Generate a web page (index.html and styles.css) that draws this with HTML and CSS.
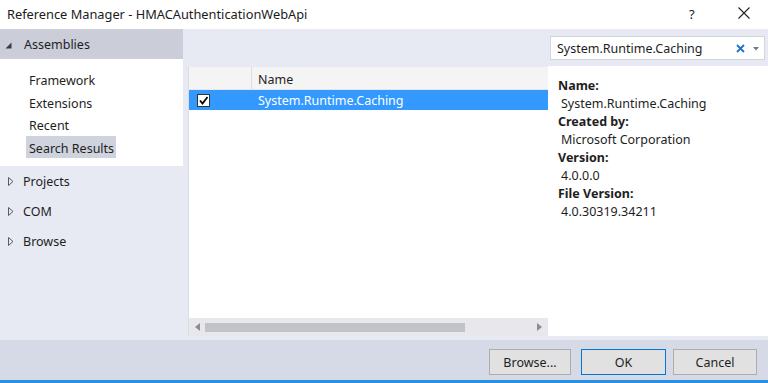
FILE: index.html
```html
<!DOCTYPE html>
<html>
<head>
<meta charset="utf-8">
<link rel="stylesheet" href="styles.css">
</head>
<body>
<div class="window">
  <header class="titlebar">
    <span class="title">Reference Manager - HMACAuthenticationWebApi</span>
    <span class="help">?</span>
    <span class="close"><svg width="12" height="12" viewBox="0 0 12 12"><path d="M0.5 0.5 L11.5 11.5 M11.5 0.5 L0.5 11.5" stroke="#222" stroke-width="1.1" fill="none"/></svg></span>
  </header>
  <div class="main">
    <nav class="sidebar">
      <div class="group-head">
        <svg class="tri-open" width="7" height="7" viewBox="0 0 7 7"><polygon points="6.5,0.5 6.5,6.5 0.5,6.5" fill="#3c3c3c"/></svg>
        <span>Assemblies</span>
      </div>
      <ul class="sub">
        <li class="sub-item">Framework</li>
        <li class="sub-item">Extensions</li>
        <li class="sub-item">Recent</li>
        <li class="sub-item active">Search Results</li>
      </ul>
      <div class="group">
        <svg class="tri" width="6" height="9" viewBox="0 0 6 9"><polygon points="0.5,0.5 5,4.5 0.5,8.5" fill="none" stroke="#5a5a5a" stroke-width="1"/></svg>
        <span>Projects</span>
      </div>
      <div class="group">
        <svg class="tri" width="6" height="9" viewBox="0 0 6 9"><polygon points="0.5,0.5 5,4.5 0.5,8.5" fill="none" stroke="#5a5a5a" stroke-width="1"/></svg>
        <span>COM</span>
      </div>
      <div class="group">
        <svg class="tri" width="6" height="9" viewBox="0 0 6 9"><polygon points="0.5,0.5 5,4.5 0.5,8.5" fill="none" stroke="#5a5a5a" stroke-width="1"/></svg>
        <span>Browse</span>
      </div>
    </nav>
    <section class="content">
      <div class="searchrow">
        <div class="search">
          <span class="search-text">System.Runtime.Caching</span>
          <svg class="search-clear" width="9" height="9" viewBox="0 0 9 9"><path d="M1 1 L8 8 M8 1 L1 8" stroke="#1e73c8" stroke-width="1.8" fill="none"/></svg>
          <svg class="search-drop" width="6" height="4" viewBox="0 0 6 4"><polygon points="0,0 6,0 3,3.5" fill="#7a7a7a"/></svg>
        </div>
      </div>
      <div class="panes">
        <div class="grid">
          <div class="grid-head">
            <div class="col-check"></div>
            <div class="col-name">Name</div>
          </div>
          <div class="grid-row selected">
            <div class="col-check">
              <span class="checkbox"><svg width="11" height="11" viewBox="0 0 11 11"><path d="M2 5.5 L4.5 8.5 L9.5 2" stroke="#000" stroke-width="1.8" fill="none"/></svg></span>
            </div>
            <div class="col-name">System.Runtime.Caching</div>
          </div>
          <div class="grid-fill"></div>
          <div class="hscroll">
            <svg class="arrow" width="5" height="8" viewBox="0 0 5 8"><polygon points="5,0 5,8 0,4" fill="#8a8c99"/></svg>
            <div class="track"><div class="thumb"></div></div>
            <svg class="arrow" width="5" height="8" viewBox="0 0 5 8"><polygon points="0,0 0,8 5,4" fill="#8a8c99"/></svg>
          </div>
        </div>
        <div class="details">
          <div class="label">Name:</div>
          <div class="value">System.Runtime.Caching</div>
          <div class="label">Created by:</div>
          <div class="value">Microsoft Corporation</div>
          <div class="label">Version:</div>
          <div class="value">4.0.0.0</div>
          <div class="label">File Version:</div>
          <div class="value">4.0.30319.34211</div>
        </div>
      </div>
    </section>
  </div>
  <footer class="footer">
    <button class="btn btn-browse">Browse...</button>
    <button class="btn btn-ok">OK</button>
    <button class="btn btn-cancel">Cancel</button>
  </footer>
</div>
</body>
</html>
```

FILE: styles.css
```css
* { box-sizing: border-box; }
html, body { margin: 0; padding: 0; }
body {
  width: 768px;
  height: 383px;
  overflow: hidden;
  font-family: "Noto Sans", "Open Sans", sans-serif;
  font-size: 12px;
  color: #1e1e1e;
  background: #e7e9f3;
}
.window {
  display: flex;
  flex-direction: column;
  height: 383px;
}
.titlebar {
  height: 29px;
  background: #ffffff;
  display: flex;
  align-items: center;
  padding-left: 7px;
  flex: none;
}
.title { flex: 1; font-size: 12.8px; color: #1b1b1b; padding-bottom: 2px; }
.help { width: 14px; font-size: 13px; margin-right: 35px; color: #222; padding-bottom: 2px; }
.close { width: 12px; height: 12px; margin-right: 18px; display: flex; margin-bottom: 3px; }

.main {
  flex: 1;
  display: flex;
  min-height: 0;
}
.sidebar {
  width: 183px;
  flex: none;
  background: #e7e9f3;
}
.group-head {
  height: 30px;
  background: #cbcdd9;
  display: flex;
  align-items: center;
  padding-left: 5px;
  font-size: 12.5px;
}
.tri-open { margin-right: 12px; margin-top: 2px; }
.sub {
  list-style: none;
  margin: 0;
  padding: 9px 0 8px 0;
  background: #ffffff;
}
.sub-item {
  height: 22.5px;
  line-height: 19.5px;
  padding-top: 3px;
  padding-left: 29px;
  font-size: 12.5px;
}
.sub-item.active {
  margin-left: 26px;
  margin-right: 67px;
  padding-left: 3px;
  background: #cfd3de;
}
.group {
  height: 30px;
  display: flex;
  align-items: center;
  padding-left: 8px;
  padding-top: 1px;
  font-size: 12.5px;
}
.tri { margin-right: 9px; }

.content {
  flex: 1;
  display: flex;
  flex-direction: column;
  padding: 7px 0 4px 5px;
  min-width: 0;
}
.searchrow {
  height: 24px;
  display: flex;
  justify-content: flex-end;
  padding-right: 3px;
  margin-bottom: 6px;
  flex: none;
}
.search {
  width: 215px;
  height: 24px;
  background: #ffffff;
  border: 1px solid #d4d6dc;
  display: flex;
  align-items: center;
  padding-left: 6px;
}
.search-text { flex: 1; font-size: 12.5px; }
.search-clear { margin-right: 8px; }
.search-drop { margin-right: 5px; margin-top: 1px; }

.panes {
  flex: 1;
  display: flex;
  min-height: 0;
}
.grid {
  width: 360px;
  flex: none;
  background: #ffffff;
  border-left: 1px solid #dcdee6;
  display: flex;
  flex-direction: column;
  margin-top: 1px;
}
.grid-head {
  height: 23px;
  display: flex;
  background: #f4f4f4;
  border-bottom: 1px solid #e6e6e6;
  flex: none;
}
.grid-head .col-check { border-right: 1px solid #dedede; }
.grid-head .col-name { padding-top: 3px; }
.col-check {
  width: 63px;
  flex: none;
  display: flex;
  align-items: center;
  padding-left: 8px;
}
.col-name {
  padding-left: 6px;
  display: flex;
  align-items: center;
  font-size: 12.5px;
}
.grid-row {
  height: 20px;
  display: flex;
  flex: none;
}
.grid-row.selected { background: #3399ff; color: #ffffff; }
.checkbox {
  width: 13px;
  height: 13px;
  background: #ffffff;
  border: 1px solid #333;
  display: flex;
  align-items: center;
  justify-content: center;
}
.grid-fill { flex: 1; }
.hscroll {
  height: 18px;
  background: #e8e8ec;
  display: flex;
  align-items: center;
  padding: 0 6px 0 6px;
  flex: none;
}
.track { flex: 1; padding: 0 5px 0 5px; }
.thumb {
  width: 260px;
  height: 9px;
  background: #c2c3c9;
}
.details {
  flex: 1;
  background: #ffffff;
  padding: 11px 0 0 10px;
  line-height: 18px;
  font-size: 12.5px;
}
.label { font-weight: bold; }
.value { padding-left: 3px; }

.footer {
  height: 43px;
  flex: none;
  background: #d6dae7;
  border-bottom: 3px solid #2b8fe0;
  display: flex;
  justify-content: flex-end;
  align-items: flex-start;
  padding: 9px 11px 0 0;
}
.btn {
  height: 26px;
  background: #e1e1e1;
  border: 1px solid #adadad;
  font-family: "Noto Sans", "Open Sans", sans-serif;
  font-size: 12.5px;
  color: #1e1e1e;
  padding: 0;
}
.btn-browse { width: 82px; margin-right: 10px; }
.btn-ok { width: 85px; margin-right: 7px; border-color: #0078d7; }
.btn-cancel { width: 84px; }
```
